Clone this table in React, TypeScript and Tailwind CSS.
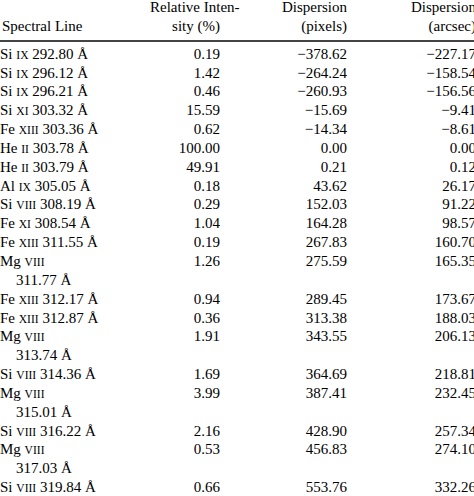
import React from "react";

type Row = { el: string; ion: string; wl: string; wrap?: boolean; ri: string; px: string; as: string };

const rows: Row[] = [
  { el: "Si", ion: "IX", wl: "292.80", ri: "0.19", px: "−378.62", as: "−227.17" },
  { el: "Si", ion: "IX", wl: "296.12", ri: "1.42", px: "−264.24", as: "−158.54" },
  { el: "Si", ion: "IX", wl: "296.21", ri: "0.46", px: "−260.93", as: "−156.56" },
  { el: "Si", ion: "XI", wl: "303.32", ri: "15.59", px: "−15.69", as: "−9.41" },
  { el: "Fe", ion: "XIII", wl: "303.36", ri: "0.62", px: "−14.34", as: "−8.61" },
  { el: "He", ion: "II", wl: "303.78", ri: "100.00", px: "0.00", as: "0.00" },
  { el: "He", ion: "II", wl: "303.79", ri: "49.91", px: "0.21", as: "0.12" },
  { el: "Al", ion: "IX", wl: "305.05", ri: "0.18", px: "43.62", as: "26.17" },
  { el: "Si", ion: "VIII", wl: "308.19", ri: "0.29", px: "152.03", as: "91.22" },
  { el: "Fe", ion: "XI", wl: "308.54", ri: "1.04", px: "164.28", as: "98.57" },
  { el: "Fe", ion: "XIII", wl: "311.55", ri: "0.19", px: "267.83", as: "160.70" },
  { el: "Mg", ion: "VIII", wl: "311.77", wrap: true, ri: "1.26", px: "275.59", as: "165.35" },
  { el: "Fe", ion: "XIII", wl: "312.17", ri: "0.94", px: "289.45", as: "173.67" },
  { el: "Fe", ion: "XIII", wl: "312.87", ri: "0.36", px: "313.38", as: "188.03" },
  { el: "Mg", ion: "VIII", wl: "313.74", wrap: true, ri: "1.91", px: "343.55", as: "206.13" },
  { el: "Si", ion: "VIII", wl: "314.36", ri: "1.69", px: "364.69", as: "218.81" },
  { el: "Mg", ion: "VIII", wl: "315.01", wrap: true, ri: "3.99", px: "387.41", as: "232.45" },
  { el: "Si", ion: "VIII", wl: "316.22", ri: "2.16", px: "428.90", as: "257.34" },
  { el: "Mg", ion: "VIII", wl: "317.03", wrap: true, ri: "0.53", px: "456.83", as: "274.10" },
  { el: "Si", ion: "VIII", wl: "319.84", ri: "0.66", px: "553.76", as: "332.26" },
];

const Ion = ({ s }: { s: string }) => <span className="text-[11.6px] leading-none">{s}</span>;

export default function App() {
  return (
    <div className="w-[474px] h-[496px] overflow-hidden bg-white text-black text-[15px] leading-[18.85px] [font-family:'Liberation_Serif','Times_New_Roman',serif]">
      <div className="w-[476px] mt-[-2px]">
        <div className="grid grid-cols-[150px_70px_127px_129px]">
          <div className="flex items-end pl-[2px]">Spectral Line</div>
          <div className="text-right whitespace-nowrap">
            <div>Relative Inten-</div>
            <div>sity (%)</div>
          </div>
          <div className="text-right">
            <div>Dispersion</div>
            <div>(pixels)</div>
          </div>
          <div className="text-right">
            <div>Dispersion</div>
            <div>(arcsec)</div>
          </div>
        </div>
        <div className="h-[2px] bg-[#444] mt-[4px]" />
        <div className="pt-[3px]">
          {rows.map((r, i) => (
            <div key={i} className="grid grid-cols-[150px_70px_127px_129px]">
              <div className="whitespace-nowrap">
                {r.wrap ? (
                  <>
                    <div>
                      {r.el} <Ion s={r.ion} />
                    </div>
                    <div className="pl-[16px]">{r.wl} Å</div>
                  </>
                ) : (
                  <div>
                    {r.el} <Ion s={r.ion} /> {r.wl} Å
                  </div>
                )}
              </div>
              <div className="text-right">{r.ri}</div>
              <div className="text-right">{r.px}</div>
              <div className="text-right">{r.as}</div>
            </div>
          ))}
        </div>
      </div>
    </div>
  );
}
